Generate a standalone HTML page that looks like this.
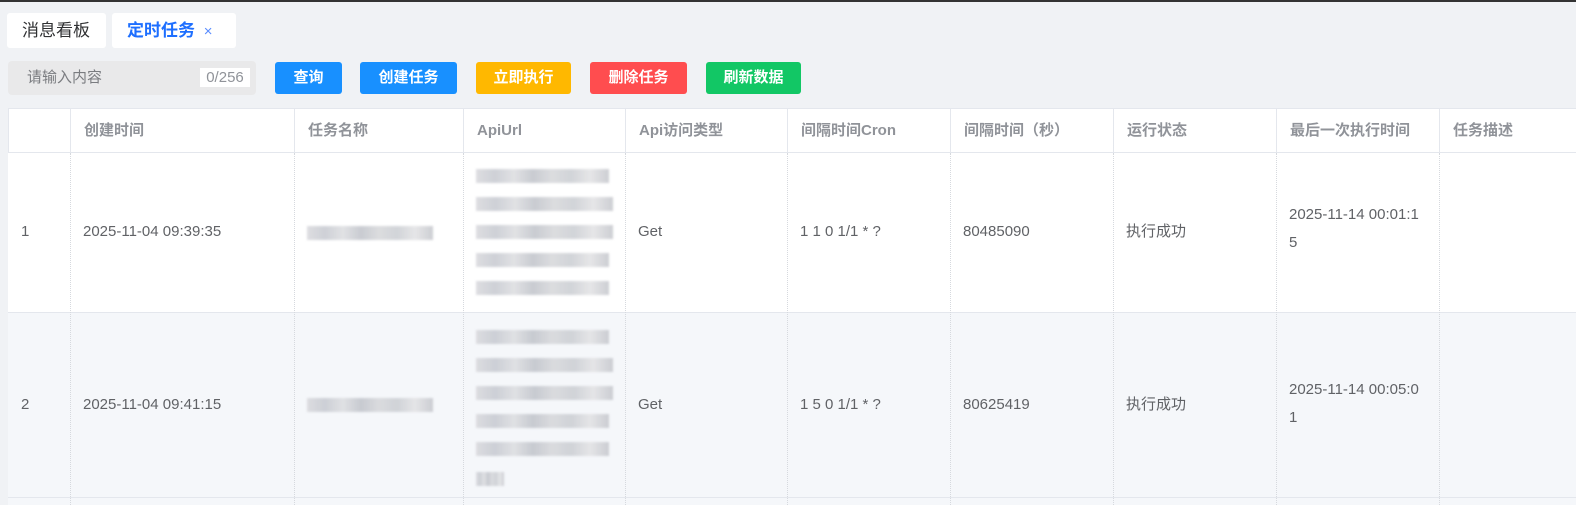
<!DOCTYPE html>
<html><head><meta charset="utf-8"><style>
*{margin:0;padding:0;box-sizing:border-box}
body{width:1576px;height:505px;overflow:hidden;background:#f0f2f5;font-family:"Liberation Sans","Noto Sans CJK SC",sans-serif;position:relative}
.a{position:absolute}
.tab{position:absolute;top:13px;height:35px;background:#fff;border-radius:3px;font-size:17px;line-height:35px;padding:0 15px}
.btn{position:absolute;top:62px;height:32px;border-radius:3px;color:#fff;font-size:15px;line-height:32px;text-align:center;font-weight:bold}
.th{position:absolute;top:109px;height:44px;line-height:44px;font-size:15px;font-weight:bold;color:#909399;padding-left:13px;background:#fff;border-left:1px solid #e4e7ed;border-bottom:1px solid #e4e7ed}
.v{position:absolute;top:153px;height:352px;border-left:1px dotted #d6d9de}
.t{position:absolute;font-size:15px;color:#606266;line-height:28px}
.b{position:absolute;height:14px;background:linear-gradient(90deg,#d8d8dc,#c6c9d0,#dcdde0,#c0c3ca,#d6d7da,#cacdd2,#e2e2e4,#c4c6cc);opacity:.85;filter:blur(1px)}
</style></head><body>
<div class="a" style="left:0;top:0;width:1576px;height:2px;background:#333"></div>
<div class="tab" style="left:7px;width:99px;color:#303133">消息看板</div>
<div class="tab" style="left:112px;width:124px;color:#1e6fff;font-weight:bold">定时任务 <span style="font-weight:normal;font-size:15px;color:#5a8dff;margin-left:4px">×</span></div>
<div class="a" style="left:8px;top:61px;width:248px;height:34px;background:#e9e9ea;border-radius:4px"></div>
<div class="a" style="left:27px;top:61px;line-height:34px;font-size:15px;color:#7a7c80">请输入内容</div>
<div class="a" style="left:200px;top:68px;height:19px;line-height:19px;width:50px;background:#fff;font-size:15px;color:#909399;text-align:center">0/256</div>
<div class="btn" style="left:275px;width:67px;background:#1890ff">查询</div>
<div class="btn" style="left:360px;width:97px;background:#1890ff">创建任务</div>
<div class="btn" style="left:476px;width:95px;background:#ffb800">立即执行</div>
<div class="btn" style="left:590px;width:97px;background:#ff4d4f">删除任务</div>
<div class="btn" style="left:706px;width:95px;background:#12c765">刷新数据</div>
<div class="a" style="left:8px;top:108px;width:1568px;height:1px;background:#e4e7ed"></div>
<div class="a" style="left:8px;top:153px;width:1568px;height:160px;background:#fff"></div>
<div class="a" style="left:8px;top:312px;width:1568px;height:193px;background:#f5f7fa;border-top:1px solid #e4e7ed"></div>
<div class="a" style="left:8px;top:497px;width:1568px;height:1px;background:#e4e7ed"></div>
<div class="th" style="left:8px;width:62px"></div>
<div class="th" style="left:70px;width:224px">创建时间</div>
<div class="th" style="left:294px;width:169px">任务名称</div>
<div class="th" style="left:463px;width:162px">ApiUrl</div>
<div class="th" style="left:625px;width:162px">Api访问类型</div>
<div class="th" style="left:787px;width:163px">间隔时间Cron</div>
<div class="th" style="left:950px;width:163px">间隔时间（秒）</div>
<div class="th" style="left:1113px;width:163px">运行状态</div>
<div class="th" style="left:1276px;width:163px">最后一次执行时间</div>
<div class="th" style="left:1439px;width:137px">任务描述</div>
<div class="v" style="left:70px"></div><div class="v" style="left:294px"></div><div class="v" style="left:463px"></div><div class="v" style="left:625px"></div><div class="v" style="left:787px"></div><div class="v" style="left:950px"></div><div class="v" style="left:1113px"></div><div class="v" style="left:1276px"></div><div class="v" style="left:1439px"></div>
<div class="t" style="left:21px;top:218px">1</div>
<div class="t" style="left:83px;top:218px">2025-11-04 09:39:35</div>
<div class="t" style="left:638px;top:218px">Get</div>
<div class="t" style="left:800px;top:218px">1 1 0 1/1 * ?</div>
<div class="t" style="left:963px;top:218px">80485090</div>
<div class="t" style="left:1126px;top:218px">执行成功</div>
<div class="t" style="left:1289px;top:201px;width:150px">2025-11-14 00:01:1<br>5</div>
<div class="t" style="left:21px;top:391px">2</div>
<div class="t" style="left:83px;top:391px">2025-11-04 09:41:15</div>
<div class="t" style="left:638px;top:391px">Get</div>
<div class="t" style="left:800px;top:391px">1 5 0 1/1 * ?</div>
<div class="t" style="left:963px;top:391px">80625419</div>
<div class="t" style="left:1126px;top:391px">执行成功</div>
<div class="t" style="left:1289px;top:376px;width:150px">2025-11-14 00:05:0<br>1</div>
<div class="b" style="left:307px;top:226px;width:126px"></div>
<div class="b" style="left:476px;top:169px;width:133px"></div>
<div class="b" style="left:476px;top:197px;width:137px"></div>
<div class="b" style="left:476px;top:225px;width:137px"></div>
<div class="b" style="left:476px;top:253px;width:133px"></div>
<div class="b" style="left:476px;top:281px;width:133px"></div>
<div class="b" style="left:307px;top:398px;width:126px"></div>
<div class="b" style="left:476px;top:330px;width:133px"></div>
<div class="b" style="left:476px;top:358px;width:137px"></div>
<div class="b" style="left:476px;top:386px;width:137px"></div>
<div class="b" style="left:476px;top:414px;width:133px"></div>
<div class="b" style="left:476px;top:442px;width:133px"></div>
<div class="b" style="left:476px;top:472px;width:28px"></div>
</body></html>
